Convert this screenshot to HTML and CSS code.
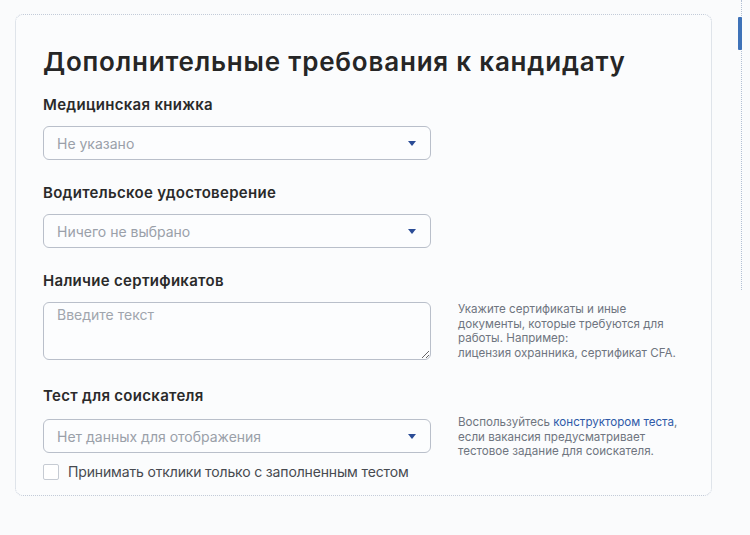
FILE: index.html
```html
<!DOCTYPE html>
<html lang="ru">
<head>
<meta charset="utf-8">
<title>Дополнительные требования к кандидату</title>
<link rel="stylesheet" href="styles.css">
</head>
<body>
<div class="page">
  <section class="card">
    <h1 class="title">Дополнительные требования к кандидату</h1>

    <div class="row">
      <div class="field">
        <div class="label">Медицинская книжка</div>
        <div class="select"><span class="ph">Не указано</span><span class="arrow"></span></div>
      </div>
    </div>

    <div class="row">
      <div class="field">
        <div class="label">Водительское удостоверение</div>
        <div class="select"><span class="ph">Ничего не выбрано</span><span class="arrow"></span></div>
      </div>
    </div>

    <div class="row row-cert">
      <div class="field">
        <div class="label">Наличие сертификатов</div>
        <textarea class="textarea" placeholder="Введите текст"></textarea>
      </div>
      <p class="help help-cert">Укажите сертификаты и иные документы, которые требуются для работы. Например:<br>лицензия охранника, сертификат CFA.</p>
    </div>

    <div class="row">
      <div class="field">
        <div class="label label-test">Тест для соискателя</div>
        <div class="select"><span class="ph">Нет данных для отображения</span><span class="arrow"></span></div>
        <label class="check"><span class="box"></span><span class="check-text">Принимать отклики только с заполненным тестом</span></label>
      </div>
      <p class="help help-test">Воспользуйтесь <a class="link">конструктором теста</a>, если вакансия предусматривает тестовое задание для соискателя.</p>
    </div>
  </section>
  <div class="track"><div class="thumb"></div></div>
</div>
</body>
</html>
```
FILE: styles.css
```css
html, body {
  margin: 0;
  padding: 0;
  background: #fafbfc;
}
body {
  font-family: "Inter", "Noto Sans", sans-serif;
  color: #2b2b2b;
}
.page {
  display: flex;
  align-items: flex-start;
  padding: 14px 0 0 15px;
}
.card {
  box-sizing: border-box;
  width: 697px;
  height: 482px;
  border: 1px dotted #c3cbd8;
  border-radius: 8px;
  background: #fbfcfd;
  padding: 30px 0 0 27px;
}
.title {
  margin: 0 0 16px;
  font-size: 26px;
  line-height: 34px;
  font-weight: 600;
  color: #262626;
  letter-spacing: 0.8px;
}
.row {
  display: flex;
  gap: 27px;
  margin-bottom: 23px;
}
.row-cert { margin-bottom: 26px; }
.field {
  width: 388px;
  flex: none;
}
.label {
  font-size: 15px;
  line-height: 20px;
  font-weight: 600;
  color: #2a2a2a;
  letter-spacing: 0.3px;
  margin-bottom: 11px;
}
.label-test { margin-bottom: 13px; }
.select {
  box-sizing: border-box;
  height: 34px;
  border: 1px solid #b9bfca;
  border-radius: 6px;
  display: flex;
  align-items: center;
  justify-content: space-between;
  padding: 0 14px 0 13px;
  background: #fcfdfe;
}
.ph {
  font-size: 14px;
  color: #9aa0a9;
}
.arrow {
  width: 0;
  height: 0;
  border-left: 4px solid transparent;
  border-right: 4px solid transparent;
  border-top: 5px solid #2a4c96;
  margin-top: 1px;
}
.textarea {
  display: block;
  box-sizing: border-box;
  width: 388px;
  height: 58px;
  border: 1px solid #b9bfca;
  border-radius: 6px;
  background: #fcfdfe;
  padding: 3px 13px;
  font-family: "Inter", "Noto Sans", sans-serif;
  font-size: 14px;
  resize: vertical;
  outline: none;
}
.textarea::placeholder { color: #a0a5ad; }
.help {
  margin: 0;
  width: 230px;
  font-size: 11.6px;
  line-height: 14.5px;
  color: #6f7580;
}
.help-cert { margin-top: 31px; }
.help-test { margin-top: 29px; }
.link { color: #2f5aa8; text-decoration: none; }
.check {
  display: flex;
  align-items: center;
  gap: 9px;
  margin-top: 10px;
}
.box {
  box-sizing: border-box;
  width: 16px;
  height: 16px;
  border: 1px solid #c6cbd3;
  border-radius: 2px;
  background: #fff;
}
.check-text {
  font-size: 14px;
  letter-spacing: -0.15px;
  color: #474a50;
}
.track {
  margin-left: 26px;
  margin-top: -14px;
  width: 4px;
  height: 290px;
  border-right: 1px dotted #b3c0d4;
  box-sizing: border-box;
}
.thumb {
  margin-top: 17px;
  width: 4px;
  height: 33px;
  background: #3e72b8;
  border-radius: 1px;
}
```
